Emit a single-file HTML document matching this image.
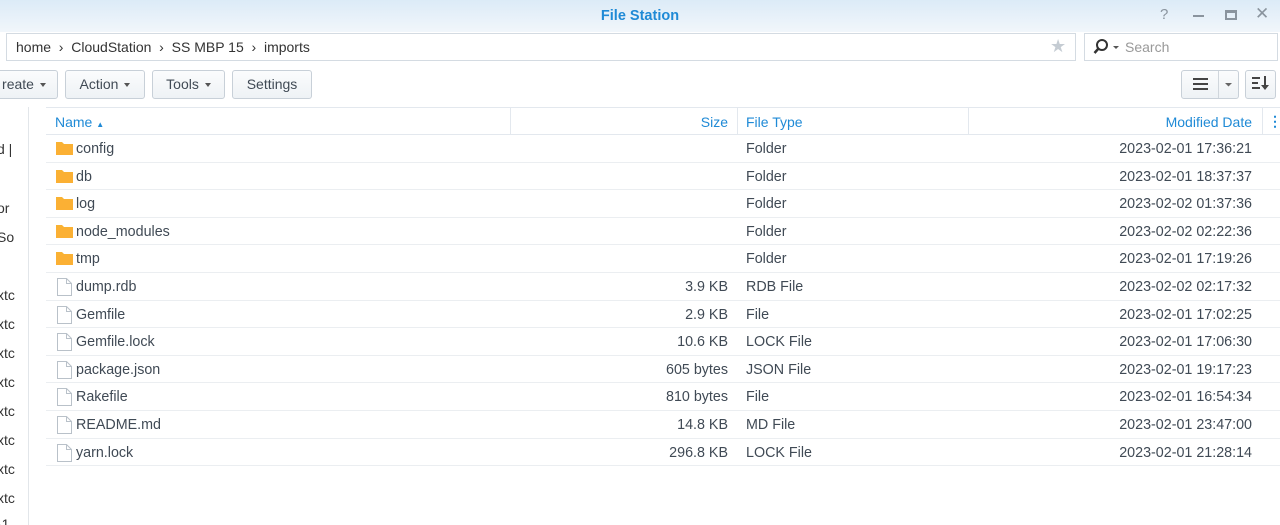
<!DOCTYPE html>
<html><head><meta charset="utf-8"><style>
*{box-sizing:border-box;margin:0;padding:0}
body{width:1280px;height:525px;overflow:hidden;background:#fff;font-family:"Liberation Sans",sans-serif;font-size:14px;color:#404a55;position:relative}
.title{position:absolute;left:0;top:0;width:1280px;height:32px;background:linear-gradient(#dcebf7,#f1f6fb);text-align:center;line-height:32px;color:#1f8ad6;font-size:14.5px;font-weight:bold}
.ab{position:absolute}
.path{left:6px;top:33px;width:1070px;height:28px;border:1px solid #d4dbe2;background:#fff;line-height:26px;padding-left:9px;color:#333;font-size:14px}
.search{left:1084px;top:33px;width:194px;height:28px;border:1px solid #d4dbe2;line-height:26px;padding-left:40px;color:#999;font-size:14px}
.btn{position:absolute;top:70px;height:29px;border:1px solid #c8d0d8;border-radius:3px;background:linear-gradient(#fbfcfd,#eef2f5);line-height:27px;text-align:center;color:#404a55;font-size:14px}
.car{display:inline-block;border:3px solid transparent;border-top:4px solid #555;border-bottom:0;vertical-align:middle;margin-left:6px}
.side{left:0;top:107px;width:29px;height:418px;border-right:1px solid #e2e6ea;overflow:hidden}
.side div{position:absolute;left:-3px;font-size:14px;color:#333;white-space:nowrap}
.hdr{left:46px;top:107px;width:1234px;height:28px;border-top:1px solid #e3e8ee;border-bottom:1px solid #e3e8ee;color:#1f8ad6;font-size:14px}
.row{position:absolute;left:46px;width:1234px;height:27.6px;border-bottom:1px solid #ebeef1;line-height:28px;font-size:14.3px}
.c{position:absolute;top:0;white-space:nowrap}
.n{left:30px}.s{right:552px}.t{left:700px}.d{right:28px}
.fold{position:absolute;left:10px;top:6px;width:17px;height:14px}
.doc{position:absolute;left:11px;top:5px;width:15px;height:18px}
</style></head><body>
<div class="title">File Station</div>
<div class="ab" style="left:1160px;top:6px;color:#8a949e;font-size:15px">?</div>
<div class="ab" style="left:1193px;top:15px;width:11px;height:2px;background:#8a949e"></div>
<div class="ab" style="left:1225px;top:10px;width:12px;height:10px;border:2px solid #8a949e;border-top-width:3px"></div>
<div class="ab" style="left:1255px;top:4px;color:#8a949e;font-size:17px">✕</div>
<div class="ab path">home &nbsp;›&nbsp; CloudStation &nbsp;›&nbsp; SS MBP 15 &nbsp;›&nbsp; imports</div>
<div class="ab" style="left:1050px;top:36px;color:#c5ccd3;font-size:18px">★</div>
<div class="ab search">Search</div>
<svg class="ab" style="left:1093px;top:39px" width="30" height="16"><circle cx="9" cy="6" r="5" fill="none" stroke="#333" stroke-width="2"/><line x1="5.5" y1="9.5" x2="1.5" y2="14" stroke="#333" stroke-width="2.5"/><path d="M20 7h6l-3 3z" fill="#555"/></svg>
<div class="btn" style="left:-10px;width:68px">reate<span class="car"></span></div>
<div class="btn" style="left:65px;width:80px">Action<span class="car"></span></div>
<div class="btn" style="left:152px;width:73px">Tools<span class="car"></span></div>
<div class="btn" style="left:232px;width:80px">Settings</div>
<div class="btn" style="left:1181px;width:58px"></div>
<div class="ab" style="left:1218px;top:71px;width:1px;height:27px;background:#d0d6dc"></div>
<svg class="ab" style="left:1193px;top:78px" width="16" height="12"><rect y="0" width="15" height="2" fill="#444"/><rect y="5" width="15" height="2" fill="#444"/><rect y="10" width="15" height="2" fill="#444"/></svg>
<svg class="ab" style="left:1225px;top:83px" width="8" height="5"><path d="M0 0h7l-3.5 3.5z" fill="#666"/></svg>
<div class="btn" style="left:1245px;width:31px"></div>
<svg class="ab" style="left:1252px;top:76px" width="18" height="16"><rect x="0" y="1" width="8" height="2" fill="#444"/><rect x="0" y="6" width="6" height="2" fill="#444"/><rect x="0" y="11" width="8" height="2" fill="#444"/><rect x="12" y="0" width="2" height="10" fill="#444"/><path d="M9 9h8l-4 5z" fill="#444"/></svg>
<div class="ab side">
<div style="top:34px">d |</div><div style="top:93px">or</div><div style="top:122px">So</div>
<div style="top:180px">xtc</div><div style="top:209px">xtc</div><div style="top:238px">xtc</div><div style="top:267px">xtc</div><div style="top:296px">xtc</div><div style="top:325px">xtc</div><div style="top:354px">xtc</div><div style="top:383px">xtc</div><div style="top:409px">-1</div>
</div>
<div class="ab hdr">
<div class="c" style="left:9px;top:6px">Name <span style="font-size:8px">▲</span></div>
<div class="c" style="left:464px;top:0;width:1px;height:26px;background:#e3e8ee"></div>
<div class="c" style="right:552px;top:6px">Size</div>
<div class="c" style="left:691px;top:0;width:1px;height:26px;background:#e3e8ee"></div>
<div class="c" style="left:700px;top:6px">File Type</div>
<div class="c" style="left:922px;top:0;width:1px;height:26px;background:#e3e8ee"></div>
<div class="c" style="right:28px;top:6px">Modified Date</div>
<div class="c" style="left:1216px;top:0;width:1px;height:26px;background:#e3e8ee"></div>
<div class="c" style="left:1222px;top:5px;font-weight:bold">⋮</div>
</div>
<div id="rows"></div>
<script>
var d=[["config","","Folder","2023-02-01 17:36:21",1],["db","","Folder","2023-02-01 18:37:37",1],["log","","Folder","2023-02-02 01:37:36",1],["node_modules","","Folder","2023-02-02 02:22:36",1],["tmp","","Folder","2023-02-01 17:19:26",1],["dump.rdb","3.9 KB","RDB File","2023-02-02 02:17:32",0],["Gemfile","2.9 KB","File","2023-02-01 17:02:25",0],["Gemfile.lock","10.6 KB","LOCK File","2023-02-01 17:06:30",0],["package.json","605 bytes","JSON File","2023-02-01 19:17:23",0],["Rakefile","810 bytes","File","2023-02-01 16:54:34",0],["README.md","14.8 KB","MD File","2023-02-01 23:47:00",0],["yarn.lock","296.8 KB","LOCK File","2023-02-01 21:28:14",0]];
var h="";d.forEach(function(r,i){var ic=r[4]?'<svg class="fold" viewBox="0 0 17 14"><path d="M0 1h6l2 2h9v11H0z" fill="#f9b233"/><rect y="4" width="17" height="10" fill="#fbb034"/></svg>':'<svg class="doc" viewBox="0 0 15 18"><path d="M.5.5h9l5 5v12H.5z M9.5.5v5h5" fill="#fff" stroke="#b9c1c9"/></svg>';
h+='<div class="row" style="top:'+(135+i*27.6)+'px">'+ic+'<div class="c n">'+r[0]+'</div><div class="c s">'+r[1]+'</div><div class="c t">'+r[2]+'</div><div class="c d">'+r[3]+'</div></div>';});
document.getElementById("rows").innerHTML=h;
</script>
</body></html>
